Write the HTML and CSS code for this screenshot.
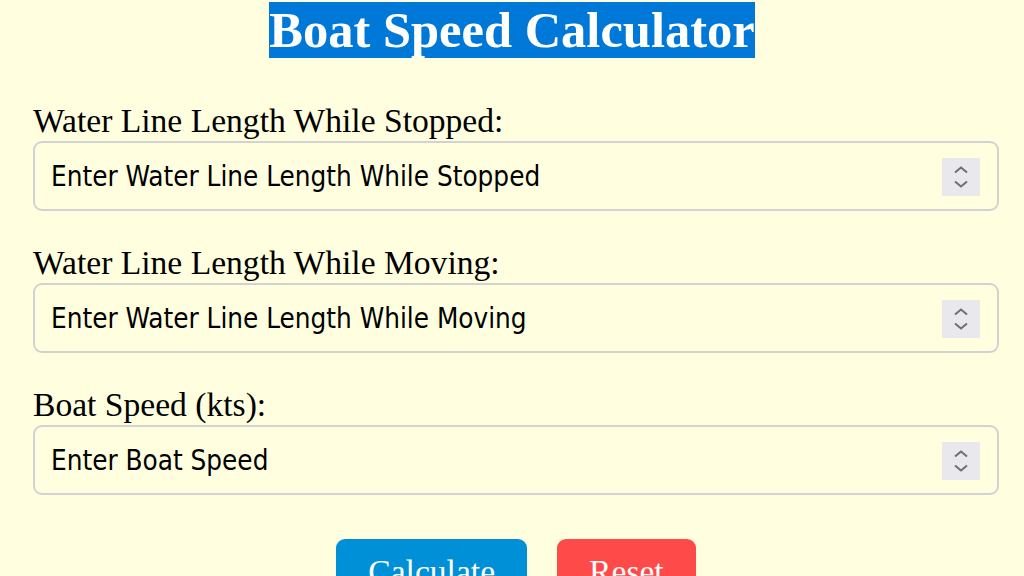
FILE: index.html
```html
<!DOCTYPE html>
<html lang="en">

<head>
    <meta charset="UTF-8">
    <meta name="viewport" content="width=device-width, initial-scale=1.0">
    <title>Boat Speed Calculator</title>
    <link rel="stylesheet" href="styles.css">
</head>

<body>

    <!-- Title -->
    <h1 class="title"><span>Boat Speed Calculator</span></h1>

    <!-- Calculator Form -->
    <form class="calc">
        <div class="field">
            <label for="stopped">Water Line Length While Stopped:</label>
            <div class="input-box">
                <input type="number" id="stopped" placeholder="Enter Water Line Length While Stopped">
                <span class="spinner">
                    <svg width="14" height="24" viewBox="0 0 14 24">
                        <path d="M1 7.5 L7 2.5 L13 7.5" />
                        <path d="M1 16.5 L7 21.5 L13 16.5" />
                    </svg>
                </span>
            </div>
        </div>

        <div class="field">
            <label for="moving">Water Line Length While Moving:</label>
            <div class="input-box">
                <input type="number" id="moving" placeholder="Enter Water Line Length While Moving">
                <span class="spinner">
                    <svg width="14" height="24" viewBox="0 0 14 24">
                        <path d="M1 7.5 L7 2.5 L13 7.5" />
                        <path d="M1 16.5 L7 21.5 L13 16.5" />
                    </svg>
                </span>
            </div>
        </div>

        <div class="field">
            <label for="speed">Boat Speed (kts):</label>
            <div class="input-box">
                <input type="number" id="speed" placeholder="Enter Boat Speed">
                <span class="spinner">
                    <svg width="14" height="24" viewBox="0 0 14 24">
                        <path d="M1 7.5 L7 2.5 L13 7.5" />
                        <path d="M1 16.5 L7 21.5 L13 16.5" />
                    </svg>
                </span>
            </div>
        </div>

        <div class="actions">
            <button type="button" class="btn calculate">Calculate</button>
            <button type="reset" class="btn reset">Reset</button>
        </div>
    </form>

</body>

</html>
```

FILE: styles.css
```css
/* General */
body {
    margin: 0;
    font-family: "Liberation Serif", "Times New Roman", serif;
    background: #ffffe0;
    color: #000;
}

/* Title */
.title {
    margin: 3px 0 44px;
    text-align: center;
    font-size: 50.5px;
    line-height: 55px;
    font-weight: bold;
}

.title span {
    background: #0078d7;
    color: #fff;
}

/* Form */
.calc {
    margin: 0 25px 0 33px;
}

.field {
    margin-bottom: 33px;
}

.field label {
    display: block;
    font-size: 33.6px;
    margin-bottom: 1px;
}

.input-box {
    display: flex;
    align-items: center;
    height: 70px;
    box-sizing: border-box;
    border: 2px solid #d2d2d2;
    border-radius: 9px;
    padding: 1px 17px 0 16px;
}

.input-box input {
    flex: 1;
    min-width: 0;
    border: none;
    outline: none;
    background: transparent;
    padding: 0;
    font-family: "DejaVu Sans Condensed", "DejaVu Sans", sans-serif;
    font-stretch: condensed;
    font-size: 27.6px;
    color: #000;
    -moz-appearance: textfield;
}

.input-box input::placeholder {
    color: #000;
    opacity: 1;
}

.input-box input::-webkit-inner-spin-button,
.input-box input::-webkit-outer-spin-button {
    -webkit-appearance: none;
    margin: 0;
}

/* Spin buttons */
.spinner {
    display: flex;
    align-items: center;
    justify-content: center;
    width: 38px;
    height: 38px;
    background: #e9e9ed;
}

.spinner path {
    fill: none;
    stroke: #6f6f6f;
    stroke-width: 2;
}

/* Buttons */
.actions {
    display: flex;
    justify-content: center;
    gap: 30px;
    margin-top: 44px;
}

.btn {
    font-family: "Liberation Serif", "Times New Roman", serif;
    font-size: 33.6px;
    color: #fff;
    border: none;
    border-radius: 9px;
    padding: 14px 32px;
    cursor: pointer;
}

.calculate {
    background: #0090d8;
}

.reset {
    background: #ff4a4a;
}
```
